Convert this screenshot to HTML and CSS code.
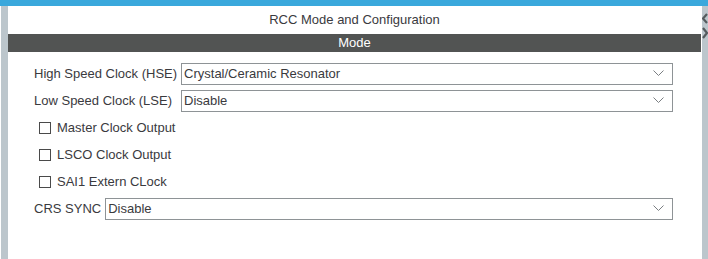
FILE: index.html
```html
<!DOCTYPE html>
<html>
<head>
<meta charset="utf-8">
<link rel="stylesheet" href="styles.css">
</head>
<body>
<div class="topbar"></div>
<div class="frame">
  <div class="edge-left"></div>
  <div class="panel">
    <div class="title">RCC Mode and Configuration</div>
    <div class="modebar">Mode</div>
    <div class="rows">
      <div class="row">
        <span class="label wide">High Speed Clock (HSE)</span>
        <div class="select"><span>Crystal/Ceramic Resonator</span>
          <svg class="chev" width="11" height="7" viewBox="0 0 11 7"><polyline points="0.5,0.5 5.5,5.5 10.5,0.5" fill="none" stroke="#7a7e82" stroke-width="1"/></svg>
        </div>
      </div>
      <div class="row">
        <span class="label wide">Low Speed Clock (LSE)</span>
        <div class="select"><span>Disable</span>
          <svg class="chev" width="11" height="7" viewBox="0 0 11 7"><polyline points="0.5,0.5 5.5,5.5 10.5,0.5" fill="none" stroke="#7a7e82" stroke-width="1"/></svg>
        </div>
      </div>
      <div class="row check"><span class="box"></span><span class="label">Master Clock Output</span></div>
      <div class="row check"><span class="box"></span><span class="label">LSCO Clock Output</span></div>
      <div class="row check"><span class="box"></span><span class="label">SAI1 Extern CLock</span></div>
      <div class="row">
        <span class="label">CRS SYNC</span>
        <div class="select"><span>Disable</span>
          <svg class="chev" width="11" height="7" viewBox="0 0 11 7"><polyline points="0.5,0.5 5.5,5.5 10.5,0.5" fill="none" stroke="#7a7e82" stroke-width="1"/></svg>
        </div>
      </div>
    </div>
  </div>
  <div class="edge-right">
    <svg width="6" height="40" viewBox="0 0 6 40"><polyline points="5,8 1,12.5 5,17" fill="none" stroke="#555b5e" stroke-width="2.2"/><polyline points="1,22 5,27 1,32" fill="none" stroke="#555b5e" stroke-width="2.2"/></svg>
  </div>
</div>
</body>
</html>
```
FILE: styles.css
```css
html, body {
  margin: 0;
  padding: 0;
  background: #ffffff;
}
body {
  width: 708px;
  height: 259px;
  overflow: hidden;
  font-family: "Liberation Sans", Arial, sans-serif;
  font-size: 13px;
  color: #3a3a3e;
}
.topbar {
  height: 6px;
  background: #3aa8dc;
}
.frame {
  display: flex;
  height: 253px;
}
.edge-left {
  width: 7px;
  margin-left: 1px;
  background: #bcc6cc;
}
.panel {
  flex: 1;
  display: flex;
  flex-direction: column;
}
.title {
  height: 28px;
  line-height: 28px;
  text-align: center;
}
.modebar {
  height: 18px;
  line-height: 18px;
  background: #525453;
  color: #ffffff;
  text-align: center;
}
.rows {
  display: flex;
  flex-direction: column;
  padding: 8px 0 0 26px;
}
.row {
  height: 27px;
  display: flex;
  align-items: center;
  white-space: nowrap;
}
.row .label {
  margin-right: 4px;
}
.row .label.wide {
  min-width: 143px;
}
.select {
  flex: 1;
  height: 20px;
  margin-right: 28px;
  border: 1px solid #8e9396;
  display: flex;
  align-items: center;
  justify-content: space-between;
  padding: 0 8px 0 2px;
}
.chev {
  display: block;
}
.row.check {
  padding-left: 5px;
}
.box {
  width: 10px;
  height: 10px;
  border: 1px solid #4a4a4a;
  margin-right: 6px;
}
.edge-right {
  width: 6px;
  margin-left: 1px;
  background: #bcc6cc;
}
.edge-right svg {
  display: block;
}
```
